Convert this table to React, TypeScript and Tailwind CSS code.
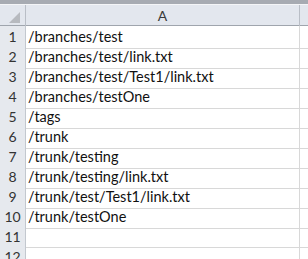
const rows = [
  '/branches/test',
  '/branches/test/link.txt',
  '/branches/test/Test1/link.txt',
  '/branches/testOne',
  '/tags',
  '/trunk',
  '/trunk/testing',
  '/trunk/testing/link.txt',
  '/trunk/test/Test1/link.txt',
  '/trunk/testOne',
  '',
  '',
];

const App = () => {
  return (
    <div
      className="w-[308px] h-[259px] overflow-hidden bg-white text-[#111]"
      style={{ fontFamily: 'Lato, "Open Sans", sans-serif' }}
    >
      <div className="h-[4px] bg-[#a7abb2]" />
      <div className="h-[1px] bg-[#f4f5f7]" />
      <div className="grid grid-cols-[26px_274px_1fr] h-[21px] bg-[#e3e7ee] border-b border-[#9fa5ad]">
        <div className="relative border-r border-[#b9bec6]">
          <div className="absolute right-[5px] bottom-[3px] w-0 h-0 border-l-[11px] border-l-transparent border-b-[11px] border-b-[#b7babf]" />
        </div>
        <div className="flex items-center justify-center border-r border-[#b9bec6] text-[14px] text-[#3a3a3a]">
          A
        </div>
        <div />
      </div>
      {rows.map((text, i) => (
        <div key={i} className="grid grid-cols-[26px_274px_1fr] h-[20px]">
          <div className="flex items-center justify-center bg-[#e6e9ee] border-r border-b border-[#c3c8cf] text-[14px] text-[#333]">
            {i + 1}
          </div>
          <div className="flex items-center pl-[2px] border-r border-b border-[#d8d8d8] text-[14.5px] whitespace-nowrap">
            {text}
          </div>
          <div className="border-b border-[#d8d8d8]" />
        </div>
      ))}
    </div>
  );
};

export default App;
